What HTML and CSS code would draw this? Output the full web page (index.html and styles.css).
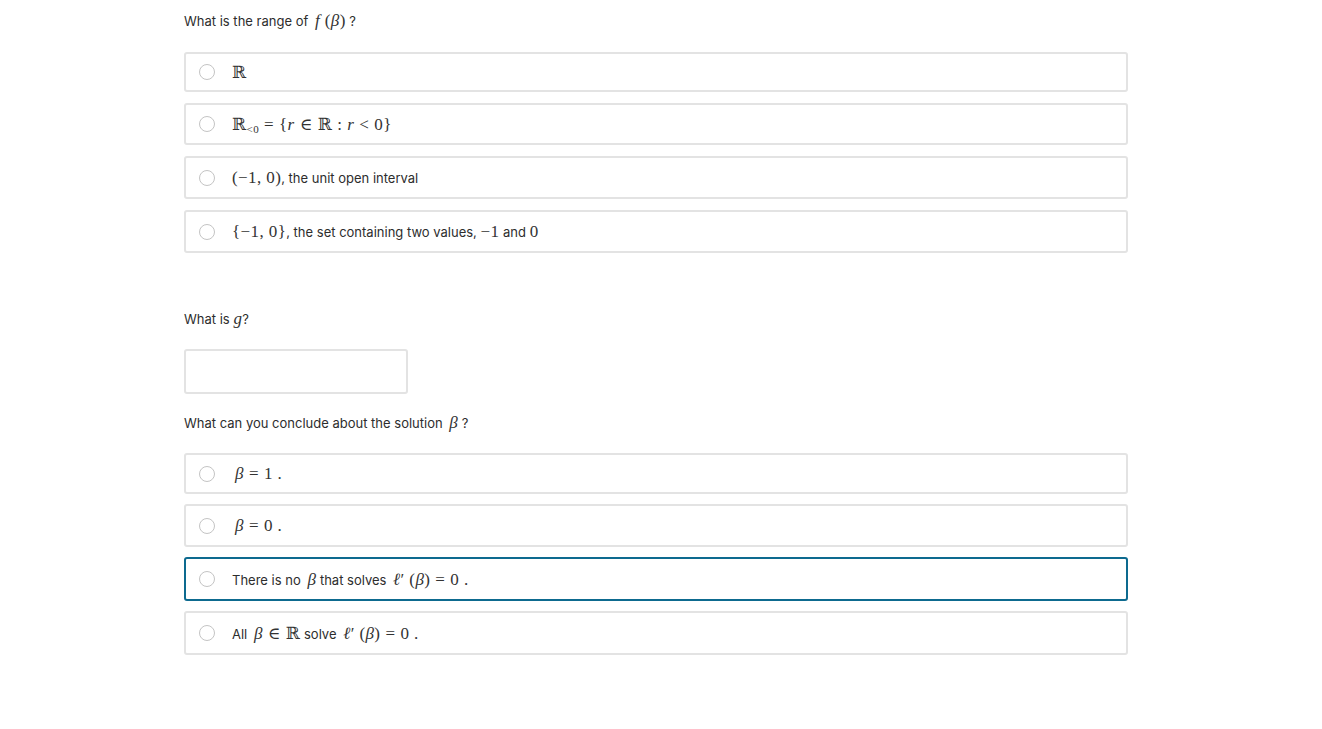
FILE: index.html
```html
<!DOCTYPE html>
<html lang="en">
<head>
    <meta charset="UTF-8">
    <meta name="viewport" content="width=device-width, initial-scale=1.0">
    <title>Quiz</title>
    <link rel="stylesheet" href="styles.css">
</head>
<body>
    <div class="quiz">
        <div class="question">
            <div class="prompt">What is the range of <span class="math lead"><i>f</i> (<i>β</i>)</span> ?</div>
            <div class="options">
                <label class="option h40">
                    <span class="radio"></span>
                    <span class="math">ℝ</span>
                </label>
                <label class="option h42">
                    <span class="radio"></span>
                    <span class="math">ℝ<sub>&lt;0</sub><span class="rel">=</span>{<i>r</i><span class="rel">∈</span>ℝ<span class="rel">:</span><i>r</i><span class="rel">&lt;</span>0}</span>
                </label>
                <label class="option h43">
                    <span class="radio"></span>
                    <span><span class="math">(−1, 0)</span>, the unit open interval</span>
                </label>
                <label class="option h43">
                    <span class="radio"></span>
                    <span><span class="math">{−1, 0}</span>, the set containing two values, <span class="math">−1</span> and <span class="math">0</span></span>
                </label>
            </div>
        </div>

        <div class="question gap-large">
            <div class="prompt">What is <span class="math"><i>g</i></span>?</div>
            <input type="text" class="answer-box">
        </div>

        <div class="question gap-small">
            <div class="prompt">What can you conclude about the solution <span class="math lead"><i>β</i></span> ?</div>
            <div class="options">
                <label class="option h41">
                    <span class="radio"></span>
                    <span class="math indent"><i>β</i><span class="rel">=</span>1 .</span>
                </label>
                <label class="option h43">
                    <span class="radio"></span>
                    <span class="math indent"><i>β</i><span class="rel">=</span>0 .</span>
                </label>
                <label class="option h44 selected">
                    <span class="radio"></span>
                    <span>There is no <span class="math lead"><i>β</i></span> that solves <span class="math lead"><i>ℓ</i>′ (<i>β</i>)<span class="rel">=</span>0 .</span></span>
                </label>
                <label class="option h44">
                    <span class="radio"></span>
                    <span>All <span class="math lead"><i>β</i><span class="rel">∈</span>ℝ</span> solve <span class="math lead"><i>ℓ</i>′ (<i>β</i>)<span class="rel">=</span>0 .</span></span>
                </label>
            </div>
        </div>
    </div>
</body>
</html>
```

FILE: styles.css
```css
body {
    margin: 0;
    padding: 0;
    background-color: #fff;
    color: #2d2d2d;
    font-family: Inter, 'Noto Sans', sans-serif;
    font-size: 13px;
}
.quiz {
    width: 944px;
    margin-left: 184px;
    padding-top: 11px;
}
.prompt {
    height: 20px;
    line-height: 20px;
}
.math {
    font-family: 'Liberation Serif', 'DejaVu Serif', serif;
    font-size: 17px;
    line-height: 1;
    letter-spacing: 0.4px;
    color: #333;
}
.math i {
    font-style: italic;
}
.math sub {
    font-size: 11px;
    vertical-align: -3px;
    line-height: 0;
}
.math .rel {
    margin: 0 5px;
}
.lead {
    margin-left: 3px;
}
.indent {
    margin-left: 3px;
}
.options {
    margin-top: 21px;
    display: flex;
    flex-direction: column;
    gap: 11px;
}
.option {
    display: flex;
    align-items: center;
    gap: 17px;
    box-sizing: border-box;
    height: 40px;
    padding: 0 13px;
    border: 2px solid #e3e3e3;
    border-radius: 3px;
}
.option.h41 { height: 41px; }
.option.h42 { height: 42px; }
.option.h43 { height: 43px; }
.option.h44 { height: 44px; }
.option.selected {
    border-color: #0d6a8f;
}
.radio {
    width: 14px;
    height: 14px;
    border: 1px solid #c4c4c4;
    border-radius: 50%;
    flex-shrink: 0;
}
.gap-large {
    margin-top: 56px;
}
.gap-small {
    margin-top: 19px;
}
.gap-large .answer-box {
    display: block;
    margin-top: 20px;
    width: 224px;
    height: 45px;
    box-sizing: border-box;
    border: 2px solid #e3e3e3;
    border-radius: 3px;
    outline: none;
}
.gap-small .options {
    margin-top: 20px;
    gap: 10px;
}
```
